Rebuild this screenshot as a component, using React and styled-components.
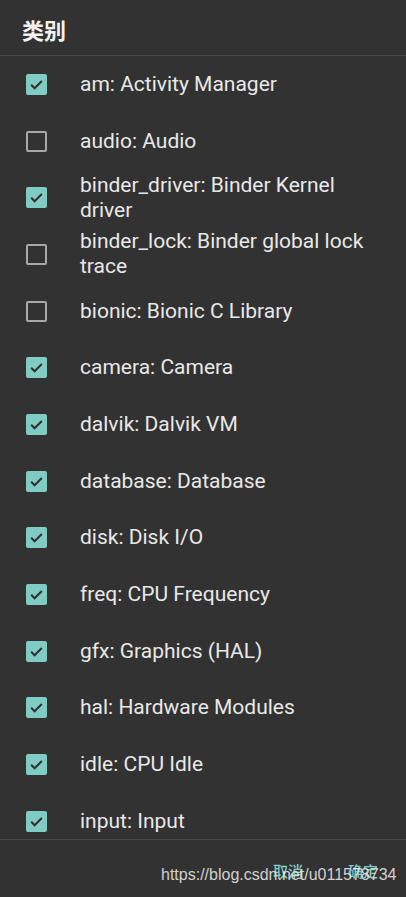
import React from 'react';
import styled, { createGlobalStyle } from 'styled-components';

const GlobalStyle = createGlobalStyle`
  html, body {
    margin: 0;
    padding: 0;
    background: #323232;
  }
  body {
    font-family: Roboto, "Noto Sans CJK SC", sans-serif;
  }
`;

const Dialog = styled.div`
  width: 406px;
  height: 897px;
  background: #323232;
  display: flex;
  flex-direction: column;
  position: relative;
  overflow: hidden;
`;

const Title = styled.div`
  height: 56px;
  box-sizing: border-box;
  padding: 3px 0 0 22px;
  display: flex;
  align-items: center;
  font-family: "Noto Sans CJK SC", sans-serif;
  font-weight: 700;
  font-size: 22px;
  color: #f2f2f2;
  border-bottom: 1px solid #4a4a4a;
`;

const List = styled.div`
  height: 783px;
  overflow: hidden;
  border-bottom: 1px solid #4a4a4a;
`;

const Row = styled.div`
  height: 56.7px;
  display: flex;
  align-items: center;
`;

const Box = styled.div`
  width: 21px;
  height: 21px;
  margin: 0 33px 0 26px;
  box-sizing: border-box;
  border-radius: 2px;
  flex-shrink: 0;
  display: flex;
  align-items: center;
  justify-content: center;
  background: ${({ checked }) => (checked ? '#80cbc4' : 'transparent')};
  border: ${({ checked }) => (checked ? 'none' : '2px solid #a8a8a8')};
`;

const Label = styled.div`
  font-size: 21px;
  line-height: 25px;
  color: #e8e8e8;
  max-width: 296px;
`;

const Footer = styled.div`
  flex: 1;
  display: flex;
  justify-content: flex-end;
  align-items: center;
  gap: 45px;
  padding: 4px 28px 0 0;
`;

const Button = styled.span`
  font-family: "Noto Sans CJK SC", sans-serif;
  font-size: 15px;
  font-weight: 500;
  color: #80cbc4;
`;

const Watermark = styled.div`
  position: absolute;
  left: 161px;
  top: 866px;
  font-family: "Liberation Sans", Arial, sans-serif;
  font-size: 16px;
  color: rgba(240, 240, 240, 0.85);
  white-space: nowrap;
  pointer-events: none;
`;

const Check = () => (
  <svg width="15" height="15" viewBox="0 0 24 24">
    <path d="M3.5 12.5l5.5 5.5L20.5 6.5" fill="none" stroke="#303030" strokeWidth="3.2" />
  </svg>
);

const items = [
  ['am: Activity Manager', true],
  ['audio: Audio', false],
  ['binder_driver: Binder Kernel driver', true],
  ['binder_lock: Binder global lock trace', false],
  ['bionic: Bionic C Library', false],
  ['camera: Camera', true],
  ['dalvik: Dalvik VM', true],
  ['database: Database', true],
  ['disk: Disk I/O', true],
  ['freq: CPU Frequency', true],
  ['gfx: Graphics (HAL)', true],
  ['hal: Hardware Modules', true],
  ['idle: CPU Idle', true],
  ['input: Input', true],
  ['irq: IRQ Events', true]
];

export default function App() {
  return (
    <Dialog>
      <GlobalStyle />
      <Title>类别</Title>
      <List>
        {items.map(([text, checked]) => (
          <Row key={text}>
            <Box checked={checked}>{checked && <Check />}</Box>
            <Label>{text}</Label>
          </Row>
        ))}
      </List>
      <Footer>
        <Button>取消</Button>
        <Button>确定</Button>
      </Footer>
      <Watermark>https://blog.csdn.net/u011578734</Watermark>
    </Dialog>
  );
}
